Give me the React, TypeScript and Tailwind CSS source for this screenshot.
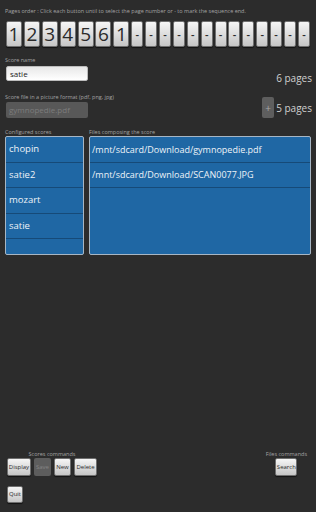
const PAGES = ["1", "2", "3", "4", "5", "6", "1", "-", "-", "-", "-", "-", "-", "-", "-", "-", "-", "-", "-", "-"];

const SCORES = ["chopin", "satie2", "mozart", "satie"];

const FILES = [
  "/mnt/sdcard/Download/gymnopedie.pdf",
  "/mnt/sdcard/Download/SCAN0077.JPG",
];

const BTN =
  "flex items-center justify-center rounded-[2px] border border-[#6f6f6f] bg-gradient-to-b from-[#f6f6f6] to-[#c6c6c6] text-[#2a2a2a] shadow-[0_1px_1px_rgba(0,0,0,0.6)]";

function CmdButton({ label, width, disabled }: { label: string; width: string; disabled?: boolean }) {
  if (disabled) {
    return (
      <div
        className={`flex h-[18px] ${width} items-center justify-center rounded-[2px] bg-[#5d5d5d] text-[6px] text-[#858585]`}
      >
        {label}
      </div>
    );
  }
  return <div className={`${BTN} h-[18px] ${width} text-[6px]`}>{label}</div>;
}

export default function App() {
  return (
    <div
      className="flex h-[512px] w-[316px] flex-col overflow-hidden bg-[#2c2c2c] text-[#cfcfcf]"
      style={{ fontFamily: '"Open Sans", "Noto Sans", sans-serif' }}
    >
      {/* Header */}
      <p className="mt-[8px] px-[5px] text-[5.5px] leading-[7px] text-[#a3a3a3]">
        Pages order : Click each button until to select the page number or - to mark the sequence end.
      </p>

      {/* Page order buttons */}
      <div className="mt-[6px] flex h-[26px] justify-between pl-[6px] pr-[6px]">
        {PAGES.map((p, i) => (
          <div
            key={i}
            className={`${BTN} h-full ${p === "-" ? "w-[12px] text-[11px] font-semibold" : "w-[16px] text-[19px]"} leading-none`}
          >
            {p}
          </div>
        ))}
      </div>

      {/* Score name */}
      <p className="mt-[10px] px-[5px] text-[5.5px] leading-[7px] text-[#a3a3a3]">Score name</p>
      <div className="mt-[2px] flex h-[18px] justify-between px-[6px] pr-[4px]">
        <div className="flex h-[15px] w-[82px] items-center rounded-[2px] border border-[#bdbdbd] bg-gradient-to-b from-[#e8e8e8] to-white px-[3px] text-[8px] text-[#222]">
          satie
        </div>
        <span className="self-end text-[10px] leading-[12px] text-[#d0d0d0]">6 pages</span>
      </div>

      {/* Score file */}
      <div className="mt-[10px] flex items-end justify-between pl-[5px] pr-[4px]">
        <div className="flex flex-col">
          <p className="text-[5.5px] leading-[7px] text-[#a3a3a3]">Score file in a picture format (pdf, png, jpg)</p>
          <div className="ml-[1px] mt-[1px] flex h-[16px] w-[82px] items-center rounded-[2px] bg-[#585858] px-[3px] text-[8px] text-[#7c7c7c]">
            gymnopedie.pdf
          </div>
        </div>
        <div className="flex items-center gap-[2px]">
          <div className="flex h-[21px] w-[12px] items-center justify-center rounded-[2px] bg-[#5e5e5e] text-[10px] leading-none text-[#a8a8a8]">
            +
          </div>
          <span className="text-[10px] leading-[12px] text-[#d0d0d0]">5 pages</span>
        </div>
      </div>

      {/* Lists */}
      <div className="mt-[11px] flex gap-[5px] px-[5px]">
        <div className="flex w-[79px] flex-col">
          <p className="text-[5.5px] leading-[7px] text-[#a3a3a3]">Configured scores</p>
          <div className="flex h-[119px] flex-col overflow-hidden rounded-[2px] border border-[#a7b6c4] bg-[#1f67a4]">
            {SCORES.map((s) => (
              <div
                key={s}
                className="flex h-[25.5px] shrink-0 items-center border-b border-[#164a78] px-[3px] text-[9.5px] font-medium text-[#eef3f8]"
              >
                {s}
              </div>
            ))}
          </div>
        </div>
        <div className="flex flex-1 flex-col">
          <p className="text-[5.5px] leading-[7px] text-[#a3a3a3]">Files composing the score</p>
          <div className="flex h-[119px] flex-col overflow-hidden rounded-[2px] border border-[#a7b6c4] bg-[#1f67a4]">
            {FILES.map((f) => (
              <div
                key={f}
                className="flex h-[25.5px] shrink-0 items-center border-b border-[#164a78] px-[2px] text-[9px] text-[#eef3f8]"
              >
                {f}
              </div>
            ))}
          </div>
        </div>
      </div>

      <div className="flex-1" />

      {/* Commands */}
      <div className="flex items-end justify-between pl-[7px] pr-[9px]">
        <div className="flex flex-col items-center">
          <p className="text-[5.5px] leading-[7px] text-[#a3a3a3]">Scores commands</p>
          <div className="flex gap-[3px]">
            <CmdButton label="Display" width="w-[24px]" />
            <CmdButton label="Save" width="w-[17px]" disabled />
            <CmdButton label="New" width="w-[17px]" />
            <CmdButton label="Delete" width="w-[23px]" />
          </div>
        </div>
        <div className="flex flex-col items-center">
          <p className="text-[5.5px] leading-[7px] text-[#a3a3a3]">Files commands</p>
          <CmdButton label="Search" width="w-[22px]" />
        </div>
      </div>
      <div className="mb-[9px] mt-[10px] pl-[7px]">
        <div className={`${BTN} h-[17px] w-[16px] text-[6px]`}>Quit</div>
      </div>
    </div>
  );
}
